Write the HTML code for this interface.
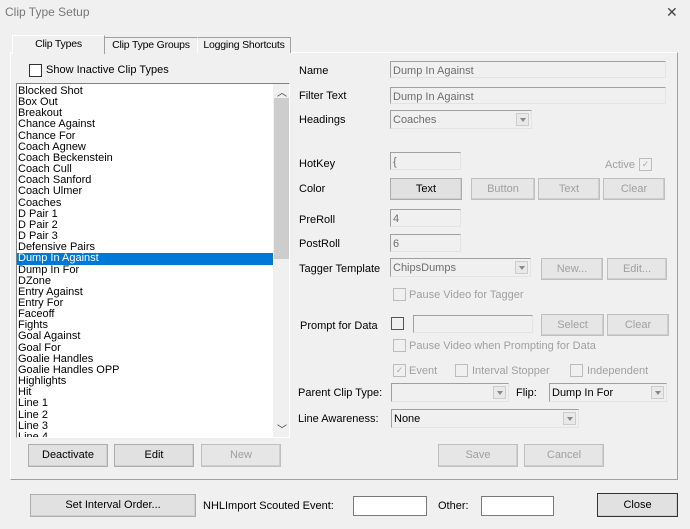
<!DOCTYPE html>
<html><head><style>
*{box-sizing:border-box;margin:0;padding:0}
body{width:690px;height:529px;background:#f0f0f0;font-family:"Liberation Sans",sans-serif;font-size:11px;color:#000;position:relative;overflow:hidden}
.a{position:absolute;white-space:nowrap}
.btn{position:absolute;border:1px solid #adadad;background:#e1e1e1;text-align:center;font-size:11px;box-shadow:inset -1px -1px 0 #cfcfcf}
.btn.d{color:#a0a0a0;background:#e6e6e6;border-color:#bfbfbf}
.tb{position:absolute;border:1px solid #a0a0a0;border-right-color:#e3e3e3;border-bottom-color:#e3e3e3;background:#f0f0f0;color:#6d6d6d;padding:3px 0 0 2px;font-size:11px}
.cb{position:absolute;width:13px;height:13px;border:1px solid #333;background:#fff}
.cb.d{border-color:#bcbcbc;background:#f0f0f0}
.dd{position:absolute;width:13px;height:13px;right:2px;top:2px;border:1px solid #ccc;background:#e9e9e9}
.dd:after{content:"";position:absolute;left:3px;top:4px;border:3px solid transparent;border-top:4px solid #888}
.g{color:#a0a0a0}
.tab{font-size:10.5px;letter-spacing:-0.2px}
</style></head><body>
<div class="a" style="left:5px;top:5px;font-size:12px;color:#777">Clip Type Setup</div>
<div class="a" style="left:666px;top:4px;font-size:14px;color:#444">✕</div>

<div class="a" style="left:10px;top:52px;width:668px;height:428px;border:1px solid #ddd;border-right-color:#a0a0a0;border-bottom-color:#a0a0a0;border-left-color:#fff;border-top-color:#fff;background:#f0f0f0"></div>
<div class="a tab" style="left:104px;top:37px;width:94px;height:16px;border:1px solid #a0a0a0;border-bottom:none;border-left-color:#fff;background:#f0f0f0;text-align:center;padding-top:1px">Clip Type Groups</div>
<div class="a tab" style="left:197px;top:37px;width:94px;height:16px;border:1px solid #a0a0a0;border-bottom:none;border-left-color:#fff;background:#f0f0f0;text-align:center;padding-top:1px">Logging Shortcuts</div>
<div class="a tab" style="left:12px;top:35px;width:93px;height:19px;border:1px solid #fff;border-right-color:#a0a0a0;border-bottom:none;background:#f0f0f0;text-align:center;padding-top:2px">Clip Types</div>

<div class="cb" style="left:29px;top:64px"></div>
<div class="a" style="left:46px;top:64px">Show Inactive Clip Types</div>

<div class="a" style="left:16px;top:83px;width:274px;height:355px;border:1px solid #828282;border-right-color:#fff;border-bottom-color:#fff;background:#fff;overflow:hidden">
<div style="position:absolute;left:0;top:2px;width:256px;line-height:11.15px;font-size:11px">
<div style="padding-left:1px">Blocked Shot</div><div style="padding-left:1px">Box Out</div><div style="padding-left:1px">Breakout</div><div style="padding-left:1px">Chance Against</div><div style="padding-left:1px">Chance For</div><div style="padding-left:1px">Coach Agnew</div><div style="padding-left:1px">Coach Beckenstein</div><div style="padding-left:1px">Coach Cull</div><div style="padding-left:1px">Coach Sanford</div><div style="padding-left:1px">Coach Ulmer</div><div style="padding-left:1px">Coaches</div><div style="padding-left:1px">D Pair 1</div><div style="padding-left:1px">D Pair 2</div><div style="padding-left:1px">D Pair 3</div><div style="padding-left:1px">Defensive Pairs</div><div style="padding-left:1px;background:#0078d7;color:#fff">Dump In Against</div><div style="padding-left:1px">Dump In For</div><div style="padding-left:1px">DZone</div><div style="padding-left:1px">Entry Against</div><div style="padding-left:1px">Entry For</div><div style="padding-left:1px">Faceoff</div><div style="padding-left:1px">Fights</div><div style="padding-left:1px">Goal Against</div><div style="padding-left:1px">Goal For</div><div style="padding-left:1px">Goalie Handles</div><div style="padding-left:1px">Goalie Handles OPP</div><div style="padding-left:1px">Highlights</div><div style="padding-left:1px">Hit</div><div style="padding-left:1px">Line 1</div><div style="padding-left:1px">Line 2</div><div style="padding-left:1px">Line 3</div><div style="padding-left:1px">Line 4</div>
</div>
<div style="position:absolute;left:256px;top:0;width:17px;height:353px;background:#f0f0f0"></div>
<div style="position:absolute;left:257px;top:14px;width:15px;height:161px;background:#cdcdcd"></div>
<div style="position:absolute;left:260px;top:0;font-size:10px;color:#333">︿</div>
<div style="position:absolute;left:260px;top:337px;font-size:10px;color:#333">﹀</div>
</div>

<div class="btn" style="left:28px;top:444px;width:80px;height:23px;line-height:21px">Deactivate</div>
<div class="btn" style="left:114px;top:444px;width:80px;height:23px;line-height:21px">Edit</div>
<div class="btn d" style="left:201px;top:444px;width:80px;height:23px;line-height:21px">New</div>

<div class="a" style="left:299px;top:65px">Name</div>
<div class="tb" style="left:390px;top:61px;width:276px;height:17px">Dump In Against</div>
<div class="a" style="left:299px;top:90px">Filter Text</div>
<div class="tb" style="left:390px;top:87px;width:276px;height:17px">Dump In Against</div>
<div class="a" style="left:299px;top:114px">Headings</div>
<div class="tb" style="left:390px;top:110px;width:142px;height:19px">Coaches<div class="dd"></div></div>

<div class="a" style="left:299px;top:158px">HotKey</div>
<div class="tb" style="left:390px;top:152px;width:71px;height:18px">{</div>
<div class="a g" style="left:605px;top:159px">Active</div>
<div class="cb d" style="left:639px;top:158px;font-size:9px;line-height:11px;text-align:center;color:#aaa">✓</div>
<div class="a" style="left:299px;top:183px">Color</div>
<div class="btn" style="left:390px;top:178px;width:72px;height:22px;line-height:20px">Text</div>
<div class="btn d" style="left:471px;top:178px;width:64px;height:22px;line-height:20px">Button</div>
<div class="btn d" style="left:538px;top:178px;width:62px;height:22px;line-height:20px">Text</div>
<div class="btn d" style="left:603px;top:178px;width:62px;height:22px;line-height:20px">Clear</div>
<div class="a" style="left:299px;top:214px">PreRoll</div>
<div class="tb" style="left:390px;top:209px;width:71px;height:18px">4</div>
<div class="a" style="left:299px;top:238px">PostRoll</div>
<div class="tb" style="left:390px;top:234px;width:71px;height:18px">6</div>
<div class="a" style="left:299px;top:263px">Tagger Template</div>
<div class="tb" style="left:390px;top:258px;width:141px;height:19px">ChipsDumps<div class="dd"></div></div>
<div class="btn d" style="left:541px;top:258px;width:62px;height:22px;line-height:20px">New...</div>
<div class="btn d" style="left:607px;top:258px;width:60px;height:22px;line-height:20px">Edit...</div>
<div class="cb d" style="left:393px;top:288px"></div>
<div class="a g" style="left:409px;top:289px">Pause Video for Tagger</div>

<div class="a" style="left:300px;top:320px">Prompt for Data</div>
<div class="cb d" style="left:391px;top:317px;border-color:#555"></div>
<div class="tb" style="left:413px;top:315px;width:120px;height:18px"></div>
<div class="btn d" style="left:541px;top:314px;width:63px;height:22px;line-height:20px">Select</div>
<div class="btn d" style="left:607px;top:314px;width:62px;height:22px;line-height:20px">Clear</div>
<div class="cb d" style="left:393px;top:339px"></div>
<div class="a g" style="left:409px;top:340px">Pause Video when Prompting for Data</div>
<div class="cb d" style="left:393px;top:364px;font-size:9px;line-height:11px;text-align:center;color:#aaa">✓</div>
<div class="a g" style="left:409px;top:365px">Event</div>
<div class="cb d" style="left:455px;top:364px"></div>
<div class="a g" style="left:472px;top:365px">Interval Stopper</div>
<div class="cb d" style="left:570px;top:364px"></div>
<div class="a g" style="left:587px;top:365px">Independent</div>
<div class="a" style="left:298px;top:387px">Parent Clip Type:</div>
<div class="tb" style="left:391px;top:383px;width:118px;height:19px"><div class="dd"></div></div>
<div class="a" style="left:516px;top:387px">Flip:</div>
<div class="tb" style="left:549px;top:383px;width:118px;height:19px;color:#000">Dump In For<div class="dd"></div></div>
<div class="a" style="left:298px;top:413px">Line Awareness:</div>
<div class="tb" style="left:391px;top:409px;width:188px;height:19px;color:#000">None<div class="dd"></div></div>
<div class="btn d" style="left:438px;top:444px;width:80px;height:23px;line-height:21px">Save</div>
<div class="btn d" style="left:524px;top:444px;width:80px;height:23px;line-height:21px">Cancel</div>

<div class="btn" style="left:30px;top:494px;width:166px;height:23px;line-height:21px">Set Interval Order...</div>
<div class="a" style="left:203px;top:500px">NHLImport Scouted Event:</div>
<div class="a" style="left:353px;top:496px;width:74px;height:20px;background:#fff;border:1px solid #7a7a7a"></div>
<div class="a" style="left:438px;top:500px">Other:</div>
<div class="a" style="left:481px;top:496px;width:73px;height:20px;background:#fff;border:1px solid #7a7a7a"></div>
<div class="btn" style="left:597px;top:493px;width:81px;height:24px;line-height:22px;border-color:#333">Close</div>
</body></html>
